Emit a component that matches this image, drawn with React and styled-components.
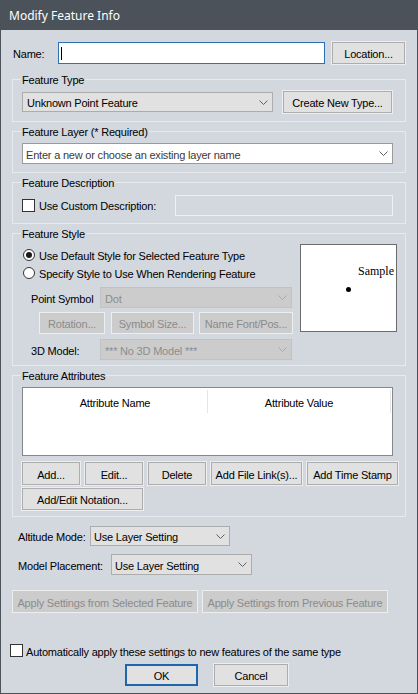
import React from 'react';
import styled, { createGlobalStyle } from 'styled-components';

const BG = '#d3d7de';

const GlobalStyle = createGlobalStyle`
  html, body {
    margin: 0;
    padding: 0;
    background: ${BG};
  }
  body {
    font-family: "Liberation Sans", Arial, sans-serif;
    font-size: 11px;
  }
`;

const Window = styled.div`
  width: 418px;
  height: 694px;
  box-sizing: border-box;
  border: 1px solid #4b5259;
  border-top: none;
  background: ${BG};
  display: flex;
  flex-direction: column;
  color: #000;
  letter-spacing: -0.2px;
  overflow: hidden;
`;

const TitleBar = styled.div`
  height: 30px;
  flex: none;
  margin: 0 -1px;
  padding-left: 9px;
  background: #4b5259;
  color: #fff;
  font-family: "Noto Sans", "Open Sans", sans-serif;
  font-size: 12px;
  letter-spacing: 0;
  display: flex;
  align-items: center;
`;

const Body = styled.div`
  display: flex;
  flex-direction: column;
  padding: 0 11px;
`;

const Row = styled.div`
  display: flex;
  align-items: center;
  height: ${({ $h }) => $h || 22}px;
  margin-top: ${({ $mt }) => $mt || 0}px;
  margin-left: ${({ $ml }) => $ml || 0}px;
  gap: ${({ $gap }) => $gap || 0}px;
`;

const Label = styled.span`
  flex: none;
  width: ${({ $w }) => ($w ? `${$w}px` : 'auto')};
  margin-left: ${({ $ml }) => $ml || 0}px;
  padding-top: 2px;
  white-space: nowrap;
`;

const TextInput = styled.div`
  box-sizing: border-box;
  width: ${({ $w }) => $w}px;
  height: ${({ $h }) => $h || 22}px;
  border: 1px solid ${({ $focus, $disabled }) => ($focus ? '#2f6fb3' : $disabled ? '#eef0f2' : '#a0a0a0')};
  background: ${({ $disabled }) => ($disabled ? 'transparent' : '#fff')};
  margin-left: ${({ $ml }) => $ml || 0}px;
  display: flex;
  align-items: center;
  flex: none;
`;

const Caret = styled.span`
  width: 1px;
  height: 13px;
  margin-left: 2px;
  background: #000;
`;

const Button = styled.button`
  box-sizing: border-box;
  flex: none;
  width: ${({ $w }) => $w}px;
  height: ${({ $h }) => $h || 22}px;
  margin-left: ${({ $ml }) => $ml || 0}px;
  padding: 2px 0 0;
  font: inherit;
  letter-spacing: inherit;
  color: #000;
  background: #e1e1e1;
  border: 1px solid #adadad;
  box-shadow: 0 0 0 1px #eceef1;
  border-radius: 0;
  white-space: nowrap;

  &:disabled {
    color: #8b8b8b;
    background: #cccccc;
    border-color: #eeeeee;
    box-shadow: none;
  }

  ${({ $default }) =>
    $default &&
    `
    border: 2px solid #1f67ad;
    box-shadow: none;
  `}
`;

const ComboBox = styled.div`
  box-sizing: border-box;
  flex: none;
  width: ${({ $w }) => $w}px;
  height: ${({ $h }) => $h || 21}px;
  margin-left: ${({ $ml }) => $ml || 0}px;
  padding-left: ${({ $pl }) => $pl || 3}px;
  display: flex;
  align-items: center;
  background: ${({ $variant }) =>
    $variant === 'edit' ? '#fff' : $variant === 'disabled' ? '#cccccc' : '#e1e1e1'};
  border: 1px solid
    ${({ $variant }) =>
      $variant === 'edit' ? '#9a9a9a' : $variant === 'disabled' ? '#c2c2c2' : '#acacac'};
  color: ${({ $variant }) => ($variant === 'disabled' ? '#8d8d8d' : '#000')};
`;

const ComboText = styled.span`
  flex: 1;
  padding-top: 2px;
  white-space: nowrap;
  overflow: hidden;
  color: ${({ $placeholder }) => ($placeholder ? '#3a3a3a' : 'inherit')};
`;

const ChevronBox = styled.span`
  flex: none;
  width: 17px;
  display: flex;
  align-items: center;
  justify-content: center;
`;

const Chevron = ({ color = '#606060' }) => (
  <ChevronBox>
    <svg width="9" height="5" viewBox="0 0 9 5">
      <path d="M0.5 0.5 L4.5 4.5 L8.5 0.5" fill="none" stroke={color} strokeWidth="1" />
    </svg>
  </ChevronBox>
);

const Combo = ({ text, variant, placeholder, ...rest }) => (
  <ComboBox $variant={variant} {...rest}>
    <ComboText $placeholder={placeholder}>{text}</ComboText>
    <Chevron color={variant === 'disabled' ? '#a8a8a8' : '#606060'} />
  </ComboBox>
);

const Group = styled.div`
  border: 1px solid #e6e9ed;
  margin-top: ${({ $mt }) => $mt || 9}px;
  padding: 0 8px ${({ $pb }) => $pb || 8}px 9px;
`;

const Legend = styled.div`
  width: fit-content;
  margin: -6px 0 4px -1px;
  padding: 0 1px;
  line-height: 13px;
  background: ${BG};
`;

const Box = styled.span`
  box-sizing: border-box;
  flex: none;
  width: 13px;
  height: 13px;
  margin-left: ${({ $ml }) => $ml || 0}px;
  border: 1px solid #333;
  background: #fff;
`;

const Radio = styled.span`
  box-sizing: border-box;
  flex: none;
  width: 12px;
  height: 12px;
  margin-left: 1px;
  border-radius: 50%;
  border: 1px solid #333;
  background: #fff;
  display: flex;
  align-items: center;
  justify-content: center;

  &::after {
    content: '';
    width: 6px;
    height: 6px;
    border-radius: 50%;
    background: ${({ $checked }) => ($checked ? '#1a1a1a' : 'transparent')};
  }
`;

const StyleBody = styled.div`
  display: flex;
`;

const StyleLeft = styled.div`
  width: 278px;
  display: flex;
  flex-direction: column;
`;

const Preview = styled.div`
  position: relative;
  box-sizing: border-box;
  width: 97px;
  height: 88px;
  margin-top: -1px;
  border: 1px solid #6b6b6b;
  background: #fff;
  overflow: hidden;
`;

const SampleText = styled.span`
  position: absolute;
  left: 57px;
  top: 19px;
  font-family: "Liberation Serif", "Times New Roman", serif;
  font-size: 12px;
  line-height: 14px;
  letter-spacing: 0;
  white-space: nowrap;
`;

const SampleDot = styled.span`
  position: absolute;
  left: 45px;
  top: 42px;
  width: 5px;
  height: 5px;
  border-radius: 50%;
  background: #000;
`;

const ListView = styled.div`
  box-sizing: border-box;
  width: 371px;
  height: 69px;
  border: 1px solid #828790;
  background: #fff;
`;

const ListHeader = styled.div`
  display: grid;
  grid-template-columns: 185px 183px;
  height: 25px;
`;

const HeaderCell = styled.div`
  display: flex;
  align-items: center;
  justify-content: center;
  margin: 2px 0 0;
  padding-top: 2px;
  border-right: 1px solid #e5e5e5;
`;

export default function App() {
  return (
    <>
      <GlobalStyle />
      <Window>
        <TitleBar>Modify Feature Info</TitleBar>
        <Body>
          <Row $mt={12}>
            <Label $ml={1} $w={45}>Name:</Label>
            <TextInput $w={267} $focus>
              <Caret />
            </TextInput>
            <Button $w={73} $ml={7}>Location...</Button>
          </Row>

          <Group $mt={15}>
            <Legend>Feature Type</Legend>
            <Row>
              <Combo $w={251} $h={20} $pl={4} text="Unknown Point Feature" />
              <Button $w={109} $ml={10}>Create New Type...</Button>
            </Row>
          </Group>

          <Group>
            <Legend>Feature Layer (* Required)</Legend>
            <Combo
              variant="edit"
              $w={371}
              placeholder
              text="Enter a new or choose an existing layer name"
            />
          </Group>

          <Group $pb={7}>
            <Legend>Feature Description</Legend>
            <Row>
              <Box />
              <Label $ml={4} $w={136}>Use Custom Description:</Label>
              <TextInput $w={218} $h={21} $disabled />
            </Row>
          </Group>

          <Group $pb={5}>
            <Legend>Feature Style</Legend>
            <StyleBody>
              <StyleLeft>
                <Row $h={18} $mt={1}>
                  <Radio $checked />
                  <Label $ml={4}>Use Default Style for Selected Feature Type</Label>
                </Row>
                <Row $h={18}>
                  <Radio />
                  <Label $ml={4}>Specify Style to Use When Rendering Feature</Label>
                </Row>
                <Row $h={21} $mt={5}>
                  <Label $ml={9} $w={69}>Point Symbol</Label>
                  <Combo variant="disabled" $w={192} $pl={4} text="Dot" />
                </Row>
                <Row $mt={4} $ml={17}>
                  <Button $w={66} disabled>Rotation...</Button>
                  <Button $w={83} $ml={6} disabled>Symbol Size...</Button>
                  <Button $w={94} $ml={5} disabled>Name Font/Pos...</Button>
                </Row>
                <Row $h={21} $mt={5}>
                  <Label $ml={9} $w={69}>3D Model:</Label>
                  <Combo variant="disabled" $w={192} $pl={4} text="*** No 3D Model ***" />
                </Row>
              </StyleLeft>
              <Preview>
                <SampleText>Sample</SampleText>
                <SampleDot />
              </Preview>
            </StyleBody>
          </Group>

          <Group $pb={6}>
            <Legend>Feature Attributes</Legend>
            <ListView>
              <ListHeader>
                <HeaderCell>Attribute Name</HeaderCell>
                <HeaderCell>Attribute Value</HeaderCell>
              </ListHeader>
            </ListView>
            <Row $h={23} $mt={6} $gap={5}>
              <Button $w={58} $h={23}>Add...</Button>
              <Button $w={58} $h={23}>Edit...</Button>
              <Button $w={58} $h={23}>Delete</Button>
              <Button $w={91} $h={23}>Add File Link(s)...</Button>
              <Button $w={91} $h={23}>Add Time Stamp</Button>
            </Row>
            <Row $mt={3}>
              <Button $w={121}>Add/Edit Notation...</Button>
            </Row>
          </Group>

          <Row $h={20} $mt={9}>
            <Label $ml={6} $w={72}>Altitude Mode:</Label>
            <Combo $w={140} $h={20} text="Use Layer Setting" />
          </Row>
          <Row $h={21} $mt={8}>
            <Label $ml={6} $w={93}>Model Placement:</Label>
            <Combo $w={141} text="Use Layer Setting" />
          </Row>

          <Row $h={23} $mt={15} $gap={4}>
            <Button $w={186} $h={23} disabled>Apply Settings from Selected Feature</Button>
            <Button $w={186} $h={23} disabled>Apply Settings from Previous Feature</Button>
          </Row>

          <Row $h={15} $mt={30}>
            <Box $ml={-2} />
            <Label $ml={3}>Automatically apply these settings to new features of the same type</Label>
          </Row>

          <Row $mt={6}>
            <Button $w={73} $ml={113} $default>OK</Button>
            <Button $w={74} $ml={16}>Cancel</Button>
          </Row>
        </Body>
      </Window>
    </>
  );
}
